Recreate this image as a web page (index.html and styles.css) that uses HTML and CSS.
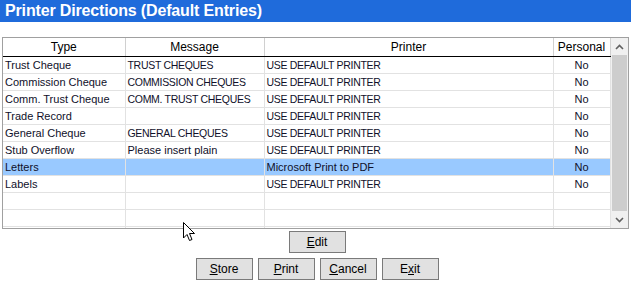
FILE: index.html
```html
<!DOCTYPE html>
<html lang="en">
<head>
    <meta charset="UTF-8">
    <title>Printer Directions</title>
    <link rel="stylesheet" href="styles.css">
</head>
<body>
    <div class="title-bar">Printer Directions (Default Entries)</div>

    <div class="grid-box">
        <table class="grid">
            <colgroup>
                <col class="col-type">
                <col class="col-msg">
                <col class="col-printer">
                <col class="col-personal">
            </colgroup>
            <thead>
                <tr>
                    <th>Type</th>
                    <th>Message</th>
                    <th>Printer</th>
                    <th>Personal</th>
                </tr>
            </thead>
            <tbody>
                <tr><td>Trust Cheque</td><td class="caps">TRUST CHEQUES</td><td class="caps">USE DEFAULT PRINTER</td><td class="center">No</td></tr>
                <tr><td>Commission Cheque</td><td class="caps">COMMISSION CHEQUES</td><td class="caps">USE DEFAULT PRINTER</td><td class="center">No</td></tr>
                <tr><td>Comm. Trust Cheque</td><td class="caps">COMM. TRUST CHEQUES</td><td class="caps">USE DEFAULT PRINTER</td><td class="center">No</td></tr>
                <tr><td>Trade Record</td><td></td><td class="caps">USE DEFAULT PRINTER</td><td class="center">No</td></tr>
                <tr><td>General Cheque</td><td class="caps">GENERAL CHEQUES</td><td class="caps">USE DEFAULT PRINTER</td><td class="center">No</td></tr>
                <tr><td>Stub Overflow</td><td>Please insert plain</td><td class="caps">USE DEFAULT PRINTER</td><td class="center">No</td></tr>
                <tr class="selected"><td>Letters</td><td></td><td>Microsoft Print to PDF</td><td class="center">No</td></tr>
                <tr><td>Labels</td><td></td><td class="caps">USE DEFAULT PRINTER</td><td class="center">No</td></tr>
                <tr><td></td><td></td><td></td><td></td></tr>
                <tr><td></td><td></td><td></td><td></td></tr>
                <tr><td></td><td></td><td></td><td></td></tr>
            </tbody>
        </table>

        <!-- vertical scrollbar -->
        <div class="scrollbar">
            <div class="scroll-btn">
                <svg width="9" height="6" viewBox="0 0 9 6"><path d="M1 5 L4.5 1.5 L8 5" fill="none" stroke="#606060" stroke-width="1.6"/></svg>
            </div>
            <div class="scroll-thumb"></div>
            <div class="scroll-btn">
                <svg width="9" height="6" viewBox="0 0 9 6"><path d="M1 1 L4.5 4.5 L8 1" fill="none" stroke="#606060" stroke-width="1.6"/></svg>
            </div>
        </div>
    </div>

    <div class="buttons">
        <div class="btn-row">
            <button><u>E</u>dit</button>
        </div>
        <div class="btn-row">
            <button><u>S</u>tore</button>
            <button><u>P</u>rint</button>
            <button><u>C</u>ancel</button>
            <button>E<u>x</u>it</button>
        </div>
    </div>

    <svg class="cursor" width="13" height="20" viewBox="0 0 13 20">
        <path d="M0.5 0.5 L0.5 16 L4 12.5 L6.5 18.5 L9 17.5 L6.5 11.5 L11.5 11.5 Z" fill="#fff" stroke="#000" stroke-width="1"/>
    </svg>
</body>
</html>
```

FILE: styles.css
```css
* {
  margin: 0;
  padding: 0;
  box-sizing: border-box;
}

body {
  background-color: #ffffff;
  font-family: "Liberation Sans", Arial, sans-serif;
  width: 631px;
  height: 292px;
  position: relative;
  overflow: hidden;
}

.title-bar {
  height: 22px;
  background-color: #1f6bdb;
  color: #ffffff;
  font-weight: bold;
  font-size: 16px;
  letter-spacing: -0.15px;
  line-height: 22px;
  padding-left: 5px;
}

.grid-box {
  display: flex;
  margin: 15px 0 0 2px;
  width: 627px;
  height: 192px;
  border: 1px solid #a0a0a0;
  overflow: hidden;
}

.grid {
  border-collapse: collapse;
  table-layout: fixed;
  width: 607px;
  font-size: 11px;
  color: #10102a;
}

.col-type { width: 122px; }
.col-msg { width: 139px; }
.col-printer { width: 289px; }
.col-personal { width: 57px; }

.grid th {
  height: 18px;
  font-weight: normal;
  font-size: 12px;
  color: #000;
  text-align: center;
  border-right: 1px solid #d0d0d0;
  border-bottom: 1px solid #000;
  white-space: nowrap;
}

.grid td {
  height: 17px;
  padding: 0 2px;
  border-right: 1px solid #e2e2e2;
  border-bottom: 1px solid #e2e2e2;
  white-space: nowrap;
  overflow: hidden;
}

.grid td.caps {
  font-size: 10.5px;
  letter-spacing: -0.3px;
}

.grid td.center {
  text-align: center;
}

.grid tr.selected td {
  background-color: #99c9ff;
}

.scrollbar {
  width: 18px;
  background-color: #f0f0f0;
  display: flex;
  flex-direction: column;
  padding: 0 1px;
}

.scroll-btn {
  height: 17px;
  display: flex;
  align-items: center;
  justify-content: center;
}

.scroll-thumb {
  flex: 1;
  background-color: #cdcdcd;
}

.buttons {
  display: flex;
  flex-direction: column;
  align-items: center;
  gap: 5px;
  margin-top: 2px;
  padding-left: 3px;
}

.btn-row {
  display: flex;
  gap: 5px;
}

button {
  width: 57px;
  height: 22px;
  background-color: #e1e1e1;
  border: 1px solid #7a7a7a;
  font-family: "Liberation Sans", Arial, sans-serif;
  font-size: 12px;
  color: #000;
}

.cursor {
  position: absolute;
  left: 183px;
  top: 222px;
}
```
